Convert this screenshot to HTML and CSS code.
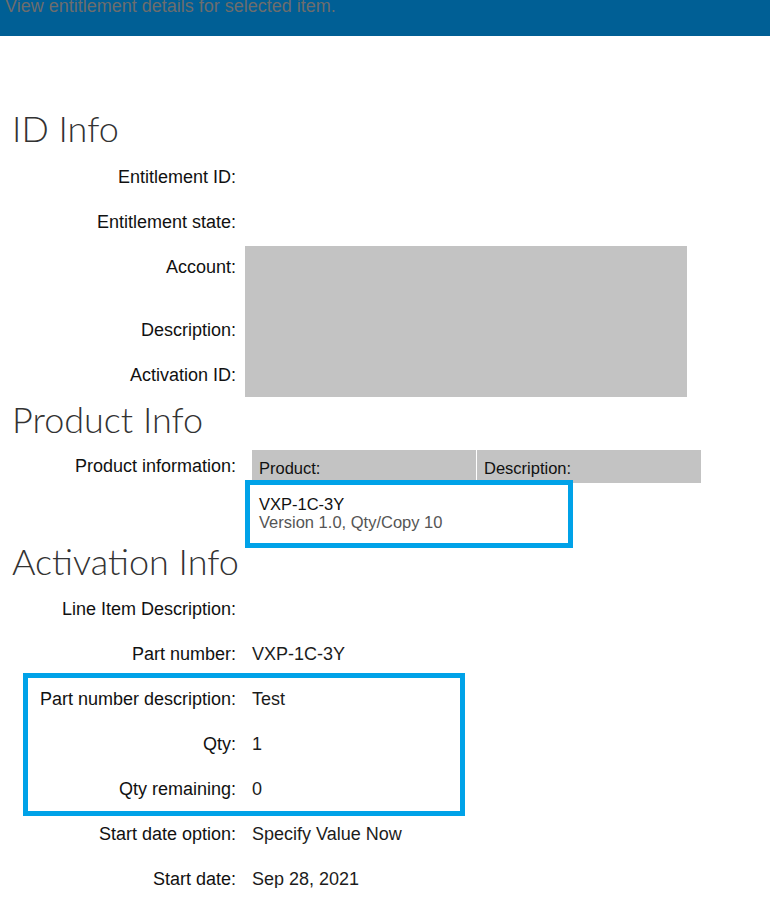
FILE: index.html
```html
<!DOCTYPE html>
<html>
<head>
<meta charset="utf-8">
<link rel="stylesheet" href="styles.css">
</head>
<body>
<div class="topbar"><p class="topbar-text">View entitlement details for selected item.</p></div>

<section class="section section-id">
  <h2 class="heading">ID Info</h2>
  <div class="rows">
    <div class="row"><div class="label">Entitlement ID:</div><div class="value"></div></div>
    <div class="row"><div class="label">Entitlement state:</div><div class="value"></div></div>
    <div class="row row-tall"><div class="label">Account:</div><div class="value"></div></div>
    <div class="row"><div class="label">Description:</div><div class="value"></div></div>
    <div class="row"><div class="label">Activation ID:</div><div class="value"></div></div>
    <div class="redact"></div>
  </div>
</section>

<section class="section section-product">
  <h2 class="heading">Product Info</h2>
  <div class="row row-product">
    <div class="label label-product">Product information:</div>
    <div class="ptable">
      <div class="pth">Product:</div>
      <div class="pth pth-desc">Description:</div>
      <div class="ptd">
        <div class="pname">VXP-1C-3Y</div>
        <div class="pmeta">Version 1.0, Qty/Copy 10</div>
      </div>
      <div class="ptd"></div>
      <div class="mark mark-product"></div>
    </div>
  </div>
</section>

<section class="section section-act">
  <h2 class="heading">Activation Info</h2>
  <div class="rows">
    <div class="row"><div class="label">Line Item Description:</div><div class="value"></div></div>
    <div class="row"><div class="label">Part number:</div><div class="value">VXP-1C-3Y</div></div>
    <div class="group">
      <div class="row"><div class="label">Part number description:</div><div class="value">Test</div></div>
      <div class="row"><div class="label">Qty:</div><div class="value">1</div></div>
      <div class="row"><div class="label">Qty remaining:</div><div class="value">0</div></div>
      <div class="mark mark-group"></div>
    </div>
    <div class="row"><div class="label">Start date option:</div><div class="value">Specify Value Now</div></div>
    <div class="row"><div class="label">Start date:</div><div class="value">Sep 28, 2021</div></div>
  </div>
</section>
</body>
</html>
```

FILE: styles.css
```css
html, body {
  margin: 0;
  padding: 0;
  background: #ffffff;
}
body {
  font-family: "Liberation Sans", Arial, sans-serif;
  font-size: 18px;
  color: #111111;
  overflow: hidden;
}
.topbar {
  height: 36px;
  background: #005f95;
  overflow: hidden;
}
.topbar-text {
  margin: -4px 0 0 5px;
  font-size: 18px;
  line-height: 20px;
  color: #6d6d6d;
}
.heading {
  margin: 0;
  padding-left: 12px;
  font-family: "Lato", sans-serif;
  font-weight: 300;
  font-size: 36px;
  line-height: 44px;
  color: #333333;
}
.section-id .heading { margin-top: 70px; }
.section-id .rows { margin-top: 18px; }
.section-product .heading { margin-top: 13px; }
.section-product .row-product { margin-top: 9px; }
.section-act .heading { margin-top: -2px; }
.section-act .rows { margin-top: 17px; }

.rows {
  position: relative;
  display: flex;
  flex-direction: column;
  gap: 27px;
}
.group {
  position: relative;
  display: flex;
  flex-direction: column;
  gap: 27px;
}
.row {
  display: grid;
  grid-template-columns: 236px 1fr;
  column-gap: 16px;
  line-height: 18px;
  min-height: 18px;
}
.row-tall { min-height: 36px; }
.label { text-align: right; }
.value { color: #1c1c1c; }

.redact {
  position: absolute;
  left: 245px;
  top: 78px;
  width: 442px;
  height: 151px;
  background: #c3c3c3;
}

.label-product { padding-top: 7px; }
.ptable {
  position: relative;
  display: grid;
  grid-template-columns: 224px 225px;
  width: 449px;
  font-size: 16.5px;
}
.pth {
  background: #c3c3c3;
  padding: 9px 7px 6px;
  line-height: 18px;
}
.pth-desc {
  border-left: 1px solid #ffffff;
  padding-left: 7px;
}
.ptd {
  padding: 12px 7px 10px;
  line-height: 18px;
}
.pname { color: #111111; }
.pmeta { color: #555555; }

.mark {
  position: absolute;
  border: 5px solid #00a2e8;
  box-sizing: border-box;
}
.mark-product {
  left: -7px;
  top: 30px;
  width: 328px;
  height: 68px;
}
.mark-group {
  left: 23px;
  top: -17px;
  width: 442px;
  height: 143px;
}
```
